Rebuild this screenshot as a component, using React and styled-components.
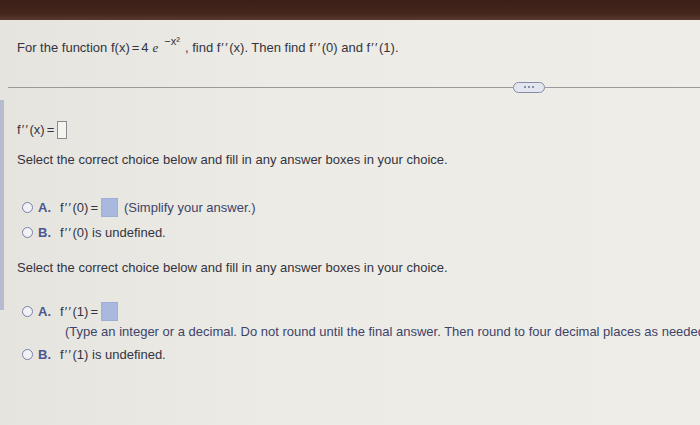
import React from "react";
import styled, { createGlobalStyle } from "styled-components";

const Global = createGlobalStyle`
  html, body { margin: 0; padding: 0; }
  body {
    width: 700px;
    height: 425px;
    overflow: hidden;
    background: #ebe9e2;
    font-family: "Liberation Sans", Arial, sans-serif;
    color: #34353f;
  }
`;

const Screen = styled.div`
  width: 700px;
  height: 425px;
  display: flex;
  flex-direction: column;
  background: linear-gradient(90deg, #e5e4de 0%, #ecebe5 40%, #eeede7 100%);
`;

const TopBar = styled.div`
  height: 20px;
  flex: none;
  background: linear-gradient(180deg, #3a2018 0%, #45261c 70%, #5a3a30 100%);
`;

const Body = styled.div`
  flex: 1;
  display: flex;
`;

const Rail = styled.div`
  width: 4px;
  height: 210px;
  margin-top: 80px;
  flex: none;
  background: #b7bbcf;
`;

const Content = styled.div`
  flex: 1;
  min-width: 0;
  padding-left: 13px;
  display: flex;
  flex-direction: column;
`;

const Line = styled.div`
  font-size: 13px;
  line-height: 16px;
  height: 16px;
  margin-top: ${(p) => p.$mt || 0}px;
  padding-left: ${(p) => p.$pl || 0}px;
  white-space: nowrap;
  display: flex;
  align-items: center;
  color: ${(p) => p.$color || "#33343f"};
`;

const Sup = styled.span`
  font-size: 11px;
  position: relative;
  top: -7px;
  margin: 0 5px 0 6px;
`;

const Em = styled.span`
  font-family: "Liberation Serif", serif;
  font-style: italic;
  margin-left: 4px;
`;

const Prime = styled.span`
  letter-spacing: 1.5px;
  margin-left: 1px;
`;

const Eq = styled.span`
  margin: 0 2px;
`;

const DividerRow = styled.div`
  margin-top: 25px;
  margin-left: -9px;
  height: 12px;
  display: flex;
  align-items: center;
`;

const Rule = styled.div`
  height: 1px;
  background: #9a9a9a;
  flex: ${(p) => (p.$grow ? 1 : "none")};
  width: ${(p) => p.$w || 0}px;
`;

const Pill = styled.div`
  width: 30px;
  height: 9px;
  border: 1px solid #868ca6;
  border-radius: 6px;
  background: #e4e6ef;
  display: flex;
  align-items: center;
  justify-content: center;
  gap: 2px;
`;

const Dot = styled.span`
  width: 2px;
  height: 2px;
  border-radius: 50%;
  background: #6a7090;
`;

const EmptyBox = styled.span`
  display: inline-block;
  width: 8px;
  height: 16px;
  border: 1px solid #8b8b8b;
  background: #f4f3ef;
  margin-left: 1px;
`;

const AnswerBox = styled.span`
  display: inline-block;
  width: 15px;
  height: 17px;
  background: #a9b8df;
  border: 1px solid #9eaed8;
  margin: 0 6px 0 1px;
`;

const Option = styled.div`
  display: flex;
  align-items: center;
  height: 18px;
  margin-top: ${(p) => p.$mt || 0}px;
  padding-left: 5px;
  font-size: 13px;
  white-space: nowrap;
  color: #33343f;
`;

const Radio = styled.span`
  width: 9px;
  height: 9px;
  border-radius: 50%;
  border: 1.5px solid #7880a6;
  background: #f2f2f5;
  flex: none;
`;

const Letter = styled.span`
  width: 22px;
  margin-left: 5px;
  font-weight: bold;
  color: #4c5592;
  flex: none;
`;

const Hint = styled.span`
  color: #40436a;
`;

const Fpp = () => (
  <>
    f<Prime>′′</Prime>
  </>
);

export default function App() {
  return (
    <Screen>
      <Global />
      <TopBar />
      <Body>
        <Rail />
        <Content>
          <Line $mt={20}>
            For the function f(x)<Eq>=</Eq>4<Em>e</Em>
            <Sup>−x²</Sup>, find <Fpp />(x). Then find <Fpp />(0) and <Fpp />(1).
          </Line>
          <DividerRow>
            <Rule $w={505} />
            <Pill>
              <Dot />
              <Dot />
              <Dot />
            </Pill>
            <Rule $grow />
          </DividerRow>
          <Line $mt={29}>
            <Fpp />(x)<Eq>=</Eq>
            <EmptyBox />
          </Line>
          <Line $mt={14}>
            Select the correct choice below and fill in any answer boxes in your choice.
          </Line>
          <Option $mt={30}>
            <Radio />
            <Letter>A.</Letter>
            <Fpp />(0)<Eq>=</Eq>
            <AnswerBox />
            <Hint>(Simplify your answer.)</Hint>
          </Option>
          <Option $mt={7}>
            <Radio />
            <Letter>B.</Letter>
            <Fpp />(0) is undefined.
          </Option>
          <Line $mt={19}>
            Select the correct choice below and fill in any answer boxes in your choice.
          </Line>
          <Option $mt={26}>
            <Radio />
            <Letter>A.</Letter>
            <Fpp />(1)<Eq>=</Eq>
            <AnswerBox />
          </Option>
          <Line $mt={4} $pl={48} $color="#40436a">
            (Type an integer or a decimal. Do not round until the final answer. Then round to four decimal places as needed.)
          </Line>
          <Option $mt={5}>
            <Radio />
            <Letter>B.</Letter>
            <Fpp />(1) is undefined.
          </Option>
        </Content>
      </Body>
    </Screen>
  );
}
